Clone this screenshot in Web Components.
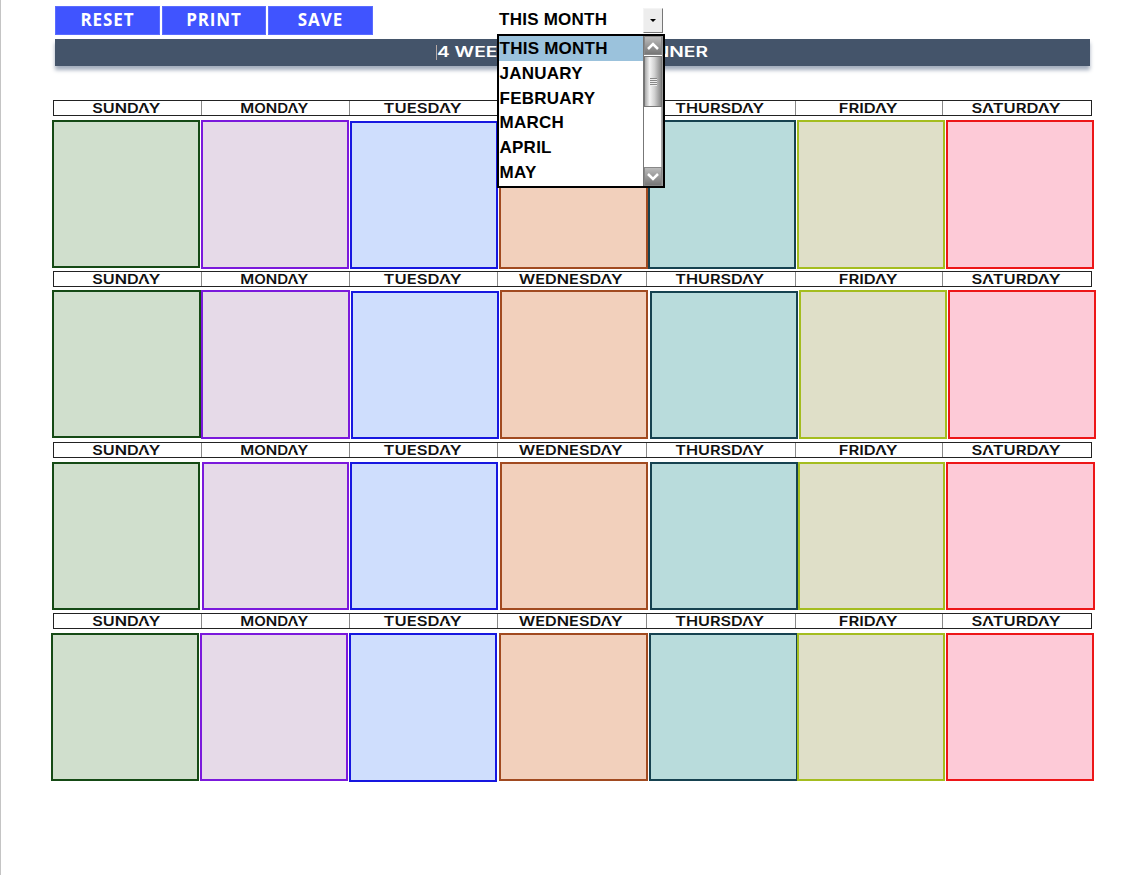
<!DOCTYPE html>
<html lang="en">
<head>
<meta charset="utf-8">
<title>4 Week Planner</title>
<style>
  body {
    margin: 0;
    background: #fff;
    color: #111;
    font-family: "Liberation Sans", Arial, sans-serif;
  }
</style>
</head>
<body>
<planner-page></planner-page>

<script>
function define(name, html, setup) {
  const template = document.createElement('template');
  template.innerHTML = html;

  window.customElements.define(name, class extends HTMLElement {
    constructor() {
      super();
      this.attachShadow({ mode: 'open' });
      this.shadowRoot.appendChild(template.content.cloneNode(true));
    }

    connectedCallback() {
      if (setup) setup(this, this.shadowRoot);
    }
  });
}

// extended lettering, stretched to the width attribute;
// the bar of each A is masked so that it stays open
define('wide-text', `
  <style>
    :host {
      display: flex;
      justify-content: center;
      white-space: nowrap;
      font-family: Inter, sans-serif;
      line-height: 1;
    }
    span { display: block; flex: none; position: relative; }
    i {
      position: absolute;
      top: .53em;
      height: .24em;
      background: var(--back, #fff);
      clip-path: polygon(18% 0, 82% 0, 100% 100%, 0 100%);
    }
  </style>
  <span></span>
`, (host, root) => {
  const span = root.querySelector('span');
  const text = host.getAttribute('text');
  span.textContent = text;
  const width = Number(host.getAttribute('width'));
  host.style.width = width + 'px';

  const box = span.getBoundingClientRect();
  const node = span.firstChild;
  for (let i = 0; i < text.length; i++) {
    if (text[i] !== 'A') continue;
    const range = document.createRange();
    range.setStart(node, i);
    range.setEnd(node, i + 1);
    const rect = range.getBoundingClientRect();
    const mask = document.createElement('i');
    mask.style.left = rect.left - box.left + rect.width * .28 + 'px';
    mask.style.width = rect.width * .44 + 'px';
    span.appendChild(mask);
  }
  span.style.transform = 'scaleX(' + width / box.width + ')';
});

define('tool-button', `
  <style>
    :host { display: block; }
    button {
      display: block;
      width: 100%;
      height: 29px;
      padding: 0 0 2px;
      border: 1px solid #5a6cff;
      background: #4054ff;
      color: #fff;
      font: bold 17px/25px "Open Sans", sans-serif;
      letter-spacing: .9px;
    }
    slot { display: block; }
  </style>
  <button><slot></slot></button>
`);

define('title-bar', `
  <style>
    :host {
      display: flex;
      align-items: center;
      box-sizing: border-box;
      width: 1035px;
      height: 27px;
      padding: 0 0 1px 381px;
      background: #44546a;
      box-shadow: 0 4px 4px #a3adbd;
      color: #fff;
      font-size: 14.5px;
      font-weight: 600;
      --back: #44546a;
    }
    i { width: 1px; height: 15px; background: #b9aaa5; }
  </style>
  <i></i>
  <wide-text text="4 WEEK MONTHLY PLANNER" width="271"></wide-text>
`);

define('day-names', `
  <style>
    :host {
      display: grid;
      grid-template-columns: 147px 148px 148px 149px 149px 147px 149px;
      box-sizing: border-box;
      width: 1039px;
      height: 16px;
      border: 1px solid #222;
    }
    div {
      display: flex;
      align-items: center;
      justify-content: center;
      padding-right: 2px;
      font-size: 13px;
      font-weight: 600;
    }
    div + div { border-left: 1px solid #888; }
  </style>
`, (host, root) => {
  const names = [['SUNDAY', 68], ['MONDAY', 68], ['TUESDAY', 78], ['WEDNESDAY', 104],
    ['THURSDAY', 89], ['FRIDAY', 59], ['SATURDAY', 89]];
  names.forEach(([name, width]) => {
    const cell = document.createElement('div');
    cell.innerHTML = `<wide-text text="${name}" width="${width}"></wide-text>`;
    root.appendChild(cell);
  });
});

define('day-box', `
  <style>
    :host {
      display: block;
      flex: none;
      box-sizing: border-box;
      height: 148px;
      border: 2px solid var(--line);
      background: var(--fill);
    }
  </style>
`);

// each box has its own left edge, top offset, width and height
define('planner-week', `
  <style>
    :host { display: block; height: 171px; }
    day-names { margin-left: 53px; }
    .boxes { display: flex; align-items: flex-start; margin-top: 4px; }
  </style>
  <day-names></day-names>
  <div class="boxes"></div>
`, (host, root) => {
  const colors = [['#154a15', '#d0dfcd'], ['#7b19dc', '#e6dae8'], ['#1717e0', '#cfdefd'],
    ['#a14a20', '#f2d0bc'], ['#164250', '#b9dcdc'], ['#a4bd1f', '#dfdfc8'], ['#ed1618', '#fdcad7']];
  const boxes = root.querySelector('.boxes');
  let end = 0;
  JSON.parse(host.getAttribute('boxes')).forEach(([x, y, width, height], i) => {
    const box = document.createElement('day-box');
    box.style.cssText = `margin: ${y}px 0 0 ${x - end}px; width: ${width}px; height: ${height}px;
      --line: ${colors[i][0]}; --fill: ${colors[i][1]}`;
    boxes.appendChild(box);
    end = x + width;
  });
});

define('scroll-bar', `
  <style>
    :host {
      display: flex;
      flex-direction: column;
      box-sizing: border-box;
      width: 20px;
      border-left: 1px solid #777;
      border-right: 1px solid #999;
      background: #fff;
    }
    .arrow {
      display: flex;
      align-items: center;
      justify-content: center;
      box-sizing: border-box;
      height: 19px;
      border: 1px solid #eee;
      outline: 1px solid #888;
      outline-offset: -1px;
      background: linear-gradient(#bbb, #777);
    }
    .thumb {
      display: flex;
      flex-direction: column;
      align-items: center;
      justify-content: center;
      gap: 1px;
      box-sizing: border-box;
      height: 51px;
      margin-top: 1px;
      border: 1px solid #777;
      background: linear-gradient(90deg, #aaa, #f4f4f4 30%, #d0d0d0 60%, #888);
    }
    .thumb i { width: 7px; height: 1px; background: #888; box-shadow: 0 1px #eee; }
    .track { flex: 1; border-right: 1px solid #aaa; }
    path { fill: none; stroke: #fff; stroke-width: 2.5; }
  </style>
  <div class="arrow"><svg width="12" height="10"><path d="M1 8 L6 3 L11 8"/></svg></div>
  <div class="thumb"><i></i><i></i><i></i><i></i></div>
  <div class="track"></div>
  <div class="arrow"><svg width="12" height="10"><path d="M1 2 L6 7 L11 2"/></svg></div>
`);

define('month-select', `
  <style>
    :host {
      display: block;
      position: relative;
      width: 168px;
      height: 35px;
      color: #000;
      font: bold 17px/24px "Liberation Sans", sans-serif;
      letter-spacing: .25px;
      white-space: nowrap;
    }
    .field { display: flex; justify-content: space-between; padding: 8px 2px 0; }
    .open {
      display: flex;
      align-items: center;
      justify-content: center;
      box-sizing: border-box;
      width: 20px;
      height: 25px;
      border: 1px solid;
      border-color: #f4f4f4 #777 #777 #f4f4f4;
      background: #ededed;
    }
    .open::after {
      content: "";
      border: solid transparent;
      border-width: 3px 3px 0;
      border-top-color: #000;
    }
    .list {
      position: absolute;
      z-index: 1;
      top: 34px;
      left: 0;
      display: flex;
      box-sizing: border-box;
      width: 168px;
      height: 154px;
      border: 2px solid #000;
      background: #fff;
    }
    .items { flex: 1; line-height: 25px; }
    .items div { height: 24.7px; padding-left: .5px; }
    .items .selected { height: 25px; background: #9bc2dc; }
  </style>
  <div class="field"><span>THIS MONTH</span><div class="open"></div></div>
  <div class="list">
    <div class="items">
      <div class="selected">THIS MONTH</div>
      <div>JANUARY</div>
      <div>FEBRUARY</div>
      <div>MARCH</div>
      <div>APRIL</div>
      <div>MAY</div>
    </div>
    <scroll-bar></scroll-bar>
  </div>
`);

define('planner-page', `
  <style>
    :host {
      display: block;
      box-sizing: border-box;
      height: 875px;
      border-left: 1px solid #c4c4c4;
      overflow: hidden;
    }
    .tools { display: flex; height: 39px; padding-left: 54px; }
    .tools tool-button { width: 105px; margin: 6px 2px 0 0; }
    .tools .mid { width: 104px; }
    month-select { margin-left: 122px; }
    title-bar { margin: 0 0 34px 54px; }
    .weeks { margin-left: -1px; }
  </style>
  <div class="tools">
    <tool-button>RESET</tool-button>
    <tool-button class="mid">PRINT</tool-button>
    <tool-button>SAVE</tool-button>
    <month-select></month-select>
  </div>
  <title-bar></title-bar>
  <div class="weeks">
    <planner-week boxes="[[52,0,148,148],[201,0,148,149],[350,1,148,148],[499,0,149,149],[648,0,148,149],[797,0,148,149],[946,0,148,149]]"></planner-week>
    <planner-week boxes="[[52,-1,149,148],[201,-1,149,149],[351,0,148,148],[500,-1,148,149],[650,0,148,148],[799,-1,148,149],[948,-1,148,149]]"></planner-week>
    <planner-week boxes="[[52,0,148,148],[202,0,147,148],[350,0,148,148],[500,0,148,148],[650,0,148,148],[798,0,147,148],[946,0,149,148]]"></planner-week>
    <planner-week boxes="[[51,0,148,148],[200,0,148,148],[349,0,148,149],[499,0,149,148],[649,0,149,148],[797,0,148,148],[946,0,148,148]]"></planner-week>
  </div>
`);
</script>
</body>
</html>
